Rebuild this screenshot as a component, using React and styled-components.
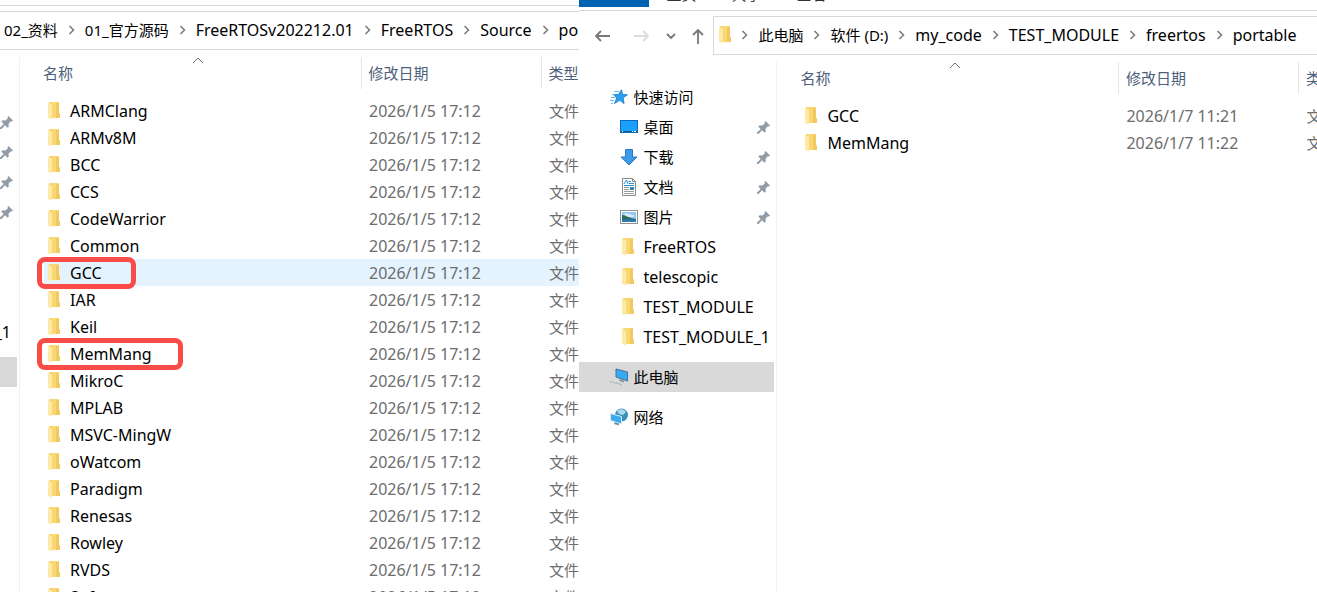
import React from 'react'
import styled, { createGlobalStyle, css } from 'styled-components'

const GlobalStyle = createGlobalStyle`
  * { box-sizing: border-box; }
  body {
    margin: 0;
    background: #fff;
    color: #000;
    font-family: "Noto Sans", "Noto Sans CJK SC", sans-serif;
    font-size: 15px;
    line-height: 20px;
    overflow: hidden;
  }
  button { font: inherit; color: inherit; border: 0; padding: 0; background: none; }
  a { color: inherit; text-decoration: none; }
`

const Desktop = styled.main`
  display: grid;
  grid-template-columns: 44fr 56fr;
  height: 100vh;
`

const Explorer = styled.section`
  display: flex;
  flex-direction: column;
  min-width: 0;
  overflow: hidden;
`

const Ribbon = styled.nav`
  display: flex;
  flex-shrink: 0;
  align-items: flex-end;
  height: ${({ $empty }) => ($empty ? '6px' : '11px')};
  padding-bottom: 3px;
  border-bottom: 1px solid #dadbdc;
`

const FileTab = styled.button`
  width: 70px;
  height: 7px;
  background: #0063b1;
`

const RibbonTab = styled.button`
  width: 65px;
  padding: 0 0 3px 17px;
  text-align: left;
  color: #333;
`

const AddressRow = styled.div`
  display: flex;
  flex-shrink: 0;
  height: 49px;
  padding: 5px 0;
`

const NavButtons = styled.div`
  display: grid;
  grid-template-columns: 46px 34px 24px 30px;
  align-items: center;
  justify-items: center;
  flex-shrink: 0;
  button { display: flex; }
`

const AddressBar = styled.nav`
  display: flex;
  align-items: center;
  flex: 1;
  min-width: 0;
  height: 39px;
  border: 1px solid #d9d9d9;
  border-width: ${({ $cut }) => ($cut ? '1px 0' : '1px 0 1px 1px')};
  padding: 0 0 2px ${({ $cut }) => ($cut ? '4px' : '5px')};
  white-space: nowrap;
  overflow: hidden;
`

const Crumb = styled.a`
  flex-shrink: 0;
  font-size: ${({ $latin }) => ($latin ? '16px' : '15px')};
`

const Body = styled.div`
  display: flex;
  flex: 1;
  min-height: 0;
`

const Sidebar = styled.aside`
  flex-shrink: 0;
  width: ${({ $cut }) => ($cut ? '20px' : '198px')};
  margin-top: 2px;
  padding: 20px 2px 0 0;
  border-right: 1px solid #f0f0f0;
  overflow: hidden;
`

const SideLabel = styled.span`
  flex: 1;
  font-size: ${({ $latin }) => ($latin ? '16px' : '15px')};
`

const SideItem = styled.a`
  display: flex;
  align-items: center;
  gap: 5px;
  height: 30px;
  padding-left: ${({ $root }) => ($root ? '31px' : '41px')};
  padding-right: 4px;
  margin-top: ${({ $gap }) => ($gap ? '10px' : '0')};
  background: ${({ $active }) => ($active ? '#d9d9d9' : 'transparent')};
  white-space: nowrap;
  svg { flex-shrink: 0; }
  ${({ $cut }) => $cut && css`
    padding-left: 0;
    justify-content: flex-end;
    ${SideLabel} { flex: none; margin-right: 2px; }
  `}
`

const FilesWrap = styled.div`
  flex: 1;
  min-width: 0;
  overflow: hidden;
  padding-top: 2px;
`

const Files = styled.table`
  table-layout: fixed;
  border-collapse: collapse;
  width: 100%;
`

const HeadCell = styled.th`
  width: ${({ $width }) => $width || 'auto'};
  height: 32px;
  padding: 0 0 0 ${({ $first }) => ($first ? '23px' : '7px')};
  border-right: ${({ $last }) => ($last ? '0' : '1px solid #e5e5e5')};
  color: #4c607a;
  font-weight: 400;
  text-align: left;
  white-space: nowrap;
  overflow: hidden;
`

const HeadInner = styled.div`
  position: relative;
`

const SortMark = styled.svg`
  position: absolute;
  top: -6px;
  left: 149px;
`

const Spacer = styled.tr`
  height: 8px;
`

const FileRow = styled.tr`
  height: 27px;
  background: ${({ $hover }) => ($hover ? 'linear-gradient(#e5f3ff, #e5f3ff) no-repeat 24px 0' : 'none')};
`

const Cell = styled.td`
  padding: 1px 0 0 8px;
  color: #6d6d6d;
  font-size: ${({ $latin }) => ($latin ? '16px' : '15px')};
  white-space: nowrap;
  overflow: hidden;
`

const NameCell = styled.td`
  padding: 1px 0 0 28px;
  font-size: 16px;
  white-space: nowrap;
`

const FileName = styled.div`
  position: relative;
  display: flex;
  align-items: center;
  gap: 10px;
`

const Mark = styled.span`
  position: absolute;
  top: -6px;
  left: -11px;
  width: ${({ $width }) => $width};
  height: 32px;
  border: 5px solid #f94c48;
  border-radius: 8px;
`

function FolderIcon() {
  return (
    <svg width="12" height="18" viewBox="0 0 12 18" aria-hidden="true">
      <path d="M1 0h10v11l1 1v4H1z" fill="#f8d775" />
      <path d="M8 1h3v10l1 1v4H8z" fill="#f2c85f" />
      <path d="M0 1l4 2v14.500L0 16z" fill="#ffe9a6" />
    </svg>
  )
}

function PinIcon() {
  return (
    <svg width="13" height="13" viewBox="0 0 13 13" aria-hidden="true">
      <path d="M8.500 0L13 4.500l-1 1-1.200-.3-2.300 2.600.3 2.700-1.300 1.300-2.500-2.500L1.500 13H0v-1.500l3.700-3.600L1.300 5.500l1.300-1.300 2.800.3 2.500-2.300-.4-1.200z" fill="#919ca6" />
    </svg>
  )
}

function Chevron() {
  return (
    <svg width="27" height="10" viewBox="0 0 27 10" aria-hidden="true" style={{ flexShrink: 0 }}>
      <path d="M11.500 1l4 4-4 4" fill="none" stroke="#7d7d7d" strokeWidth="1.600" />
    </svg>
  )
}

function StarIcon() {
  return (
    <svg width="18" height="16" viewBox="0 0 18 16" aria-hidden="true">
      <path d="M11.500.8l1 4.700 5 .3-4.300 3 .9 5.800-4.300-3.300-5.300 3.200 2.200-5.500-3.200-3.400 4.900-.1z" fill="#2b9ff0" stroke="#1578c4" strokeWidth=".8" />
      <path d="M4 2.500h5M2 5.500h3M1 8.500h4M0 11.500h4M1 14.500h2" stroke="#69b9ee" />
    </svg>
  )
}

function DesktopIcon() {
  return (
    <svg width="18" height="14" viewBox="0 0 18 14" aria-hidden="true">
      <rect x=".5" y=".5" width="17" height="12" fill="#1ba1fb" stroke="#0b6cb5" />
      <path d="M1 11.500h16" stroke="#0a5a9c" />
      <path d="M2 11.500h1M12 11.500h1M14 11.500h2" stroke="#fff" />
    </svg>
  )
}

function DownloadIcon() {
  return (
    <svg width="18" height="17" viewBox="0 0 18 17" aria-hidden="true">
      <path d="M5.500.5h7v7.500H17l-8 8-8-8h4.500z" fill="#3f9bea" stroke="#2878c4" />
    </svg>
  )
}

function DocumentIcon() {
  return (
    <svg width="18" height="18" viewBox="0 0 18 18" aria-hidden="true">
      <path d="M2.500.5h10l3 3v14h-13z" fill="#fff" stroke="#8a8a8a" />
      <path d="M12.500.5v3h3" fill="none" stroke="#8a8a8a" />
      <path d="M4 6l2.500-4L8 6M8.500 3.500H11M9 5.500h5M4 7.500h10" stroke="#2b93d8" fill="none" />
      <path d="M4 9.500h5M4 11.500h5M4 13.500h10M4 15.500h10" stroke="#9a9a9a" />
      <path d="M10 9h4v3h-4z" fill="#3982b5" />
    </svg>
  )
}

function PictureIcon() {
  return (
    <svg width="18" height="14" viewBox="0 0 18 14" aria-hidden="true">
      <rect x=".5" y=".5" width="17" height="13" fill="#fff" stroke="#909090" />
      <rect x="2" y="2" width="14" height="10" fill="#8fc8f5" />
      <path d="M4 4c3-2 5 1 10 1v2H6z" fill="#d5ebfb" />
      <path d="M2 5c4 0 6 3 14 4v1H2z" fill="#2e6b5e" />
      <path d="M2 9.500h14V12H2z" fill="#2f78b8" />
    </svg>
  )
}

function ComputerIcon() {
  return (
    <svg width="18" height="18" viewBox="0 0 18 18" aria-hidden="true">
      <path d="M6 1l11.500 3v9L6 9z" fill="#35aaf8" stroke="#4d6f8c" />
      <path d="M10 11l4 1.500v2l-5-1.500z" fill="#8b98a5" />
      <path d="M0 14c4-1 4 2 7 1l5 2" fill="none" stroke="#aab2ba" />
    </svg>
  )
}

function NetworkIcon() {
  return (
    <svg width="18" height="18" viewBox="0 0 18 18" aria-hidden="true">
      <circle cx="11.500" cy="7" r="6.500" fill="#3b8fb8" />
      <path d="M7 3c3-3 7-2 9 1l-3 3-4-1z" fill="#a7dcef" />
      <path d="M.5 5.500l11 3v7.500l-11-3.500z" fill="#3cabf2" stroke="#dcebf5" />
      <path d="M5 14l4 1.500v2l-5-1.500z" fill="#7890a3" />
    </svg>
  )
}

function ArrowIcon({ d, color = '#777', size = 16 }) {
  return (
    <svg width={size} height="16" viewBox={`0 0 ${size} 16`} aria-hidden="true">
      <path d={d} fill="none" stroke={color} strokeWidth="1.800" />
    </svg>
  )
}

function SideFolder() {
  return (
    <svg width="18" height="18" viewBox="0 0 18 18" aria-hidden="true">
      <path d="M3 0h10v11l1 1v4H3z" fill="#f8d775" />
      <path d="M10 1h3v10l1 1v4h-4z" fill="#f2c85f" />
      <path d="M2 1l4 2v14.500L2 16z" fill="#ffe9a6" />
    </svg>
  )
}

const portFolders = [
  'ARMClang', 'ARMv8M', 'BCC', 'CCS', 'CodeWarrior', 'Common', 'GCC', 'IAR', 'Keil', 'MemMang',
  'MikroC', 'MPLAB', 'MSVC-MingW', 'oWatcom', 'Paradigm', 'Renesas', 'Rowley', 'RVDS', 'Softune',
].map(name => ({ name, date: '2026/1/5 17:12' }))

const projectFolders = [
  { name: 'GCC', date: '2026/1/7 11:21' },
  { name: 'MemMang', date: '2026/1/7 11:22' },
]

const marks = { GCC: '99px', MemMang: '146px' }

const sideItems = [
  { label: '快速访问', icon: <StarIcon />, root: true },
  { label: '桌面', icon: <DesktopIcon />, pinned: true },
  { label: '下载', icon: <DownloadIcon />, pinned: true },
  { label: '文档', icon: <DocumentIcon />, pinned: true },
  { label: '图片', icon: <PictureIcon />, pinned: true },
  { label: 'FreeRTOS', icon: <SideFolder /> },
  { label: 'telescopic', icon: <SideFolder /> },
  { label: 'TEST_MODULE', icon: <SideFolder /> },
  { label: 'TEST_MODULE_1', icon: <SideFolder /> },
  { label: '此电脑', icon: <ComputerIcon />, root: true, gap: true, active: true },
  { label: '网络', icon: <NetworkIcon />, root: true, gap: true },
]

// only the right edge of this list sticks out
const cutItems = [
  {}, { pinned: true }, { pinned: true }, { pinned: true }, { pinned: true },
  {}, {}, {}, { label: '_1' }, { gap: true, active: true },
]

// Chinese glyphs look bigger than latin ones at the same size
const isLatin = text => /^[\x20-\x7e]+$/.test(text)

function Breadcrumbs({ path }) {
  return path.map((part, index) => (
    <React.Fragment key={part}>
      {index > 0 && <Chevron />}
      <Crumb href="#" $latin={isLatin(part)}>{part}</Crumb>
    </React.Fragment>
  ))
}

function SideList({ items, cut }) {
  return (
    <Sidebar $cut={cut}>
      {items.map((item, index) => (
        <SideItem key={index} href="#" $cut={cut} $root={item.root} $gap={item.gap} $active={item.active}>
          {item.icon}
          {item.label && <SideLabel $latin={isLatin(item.label)}>{item.label}</SideLabel>}
          {item.pinned && <PinIcon />}
        </SideItem>
      ))}
    </Sidebar>
  )
}

function FileTable({ rows, hovered, marked }) {
  return (
    <FilesWrap>
      <Files>
        <thead>
          <tr>
            <HeadCell $width="341px" $first>
              <HeadInner>
                名称
                <SortMark width="12" height="7" viewBox="0 0 12 7" aria-hidden="true">
                  <path d="M1 6l5-5 5 5" fill="none" stroke="#6d6d6d" />
                </SortMark>
              </HeadInner>
            </HeadCell>
            <HeadCell $width="180px">修改日期</HeadCell>
            <HeadCell $last>类型</HeadCell>
          </tr>
        </thead>
        <tbody>
          <Spacer />
          {rows.map(row => (
            <FileRow key={row.name} $hover={row.name === hovered}>
              <NameCell>
                <FileName>
                  <FolderIcon />
                  {row.name}
                  {marked && marks[row.name] && <Mark $width={marks[row.name]} />}
                </FileName>
              </NameCell>
              <Cell $latin>{row.date}</Cell>
              <Cell>文件</Cell>
            </FileRow>
          ))}
        </tbody>
      </Files>
    </FilesWrap>
  )
}

function App() {
  return (
    <>
      <GlobalStyle />
      <Desktop>
        <Explorer>
          <Ribbon $empty />
          <AddressRow>
            <AddressBar $cut>
              <Breadcrumbs path={['02_资料', '01_官方源码', 'FreeRTOSv202212.01', 'FreeRTOS', 'Source', 'po']} />
            </AddressBar>
          </AddressRow>
          <Body>
            <SideList items={cutItems} cut />
            <FileTable rows={portFolders} hovered="GCC" marked />
          </Body>
        </Explorer>
        <Explorer>
          <Ribbon>
            <FileTab aria-label="File" />
            <RibbonTab>主页</RibbonTab>
            <RibbonTab>共享</RibbonTab>
            <RibbonTab>查看</RibbonTab>
          </Ribbon>
          <AddressRow>
            <NavButtons>
              <button aria-label="Back"><ArrowIcon d="M16 8H2M7 3L2 8l5 5" /></button>
              <button aria-label="Forward"><ArrowIcon d="M0 8h14M9 3l5 5-5 5" color="#dcdcdc" /></button>
              <button aria-label="Recent"><ArrowIcon d="M1 6l4 4 4-4" size={10} /></button>
              <button aria-label="Up"><ArrowIcon d="M6 16V2M1 7l5-5 5 5" size={12} /></button>
            </NavButtons>
            <AddressBar>
              <FolderIcon />
              <Chevron />
              <Breadcrumbs path={['此电脑', '软件 (D:)', 'my_code', 'TEST_MODULE', 'freertos', 'portable']} />
            </AddressBar>
          </AddressRow>
          <Body>
            <SideList items={sideItems} />
            <FileTable rows={projectFolders} />
          </Body>
        </Explorer>
      </Desktop>
    </>
  )
}

export default App
